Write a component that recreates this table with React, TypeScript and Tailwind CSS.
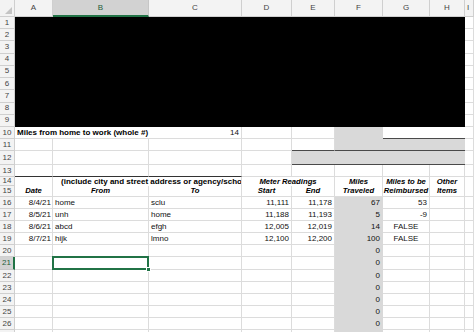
import React from 'react';

// column widths (px) — hdr 15, A 38, B 96, C 93, D 50, E 43, F 48, G 47, H 35, I rest
const GRID = 'border-r border-b border-[#dcdcdc]';
const FILL = 'bg-[#d9d9d9] border-r border-b border-transparent';

interface Trip {
  date: string;
  from: string;
  to: string;
  start: string;
  end: string;
  miles: string;
  reimb: string;
}

const TRIPS: Trip[] = [
  { date: '8/4/21', from: 'home', to: 'sclu', start: '11,111', end: '11,178', miles: '67', reimb: '53' },
  { date: '8/5/21', from: 'unh', to: 'home', start: '11,188', end: '11,193', miles: '5', reimb: '-9' },
  { date: '8/6/21', from: 'abcd', to: 'efgh', start: '12,005', end: '12,019', miles: '14', reimb: 'FALSE' },
  { date: '8/7/21', from: 'hijk', to: 'lmno', start: '12,100', end: '12,200', miles: '100', reimb: 'FALSE' },
];

function Cell({
  w,
  className = '',
  clip = true,
  children,
}: {
  w: string;
  className?: string;
  clip?: boolean;
  children?: React.ReactNode;
}) {
  return (
    <div
      className={`${w} shrink-0 h-full flex items-center whitespace-nowrap ${clip ? 'overflow-hidden' : 'relative'} ${className}`}
    >
      {children}
    </div>
  );
}

function RowHead({ n, active = false }: { n: number | string; active?: boolean }) {
  return (
    <div
      className={`w-[15px] shrink-0 h-full flex items-center justify-center border-b text-[8px] ${
        active
          ? 'bg-[#d2d2d2] border-r-2 border-r-[#217346] border-b-[#c6c6c6] text-[#1e5e3a]'
          : 'bg-[#f3f3f3] border-r border-[#cfcfcf] text-[#444]'
      }`}
    >
      {n}
    </div>
  );
}

function ColHead({ w, label, active = false }: { w: string; label: string; active?: boolean }) {
  return (
    <div
      className={`${w} shrink-0 h-full flex items-center justify-center text-[8px] ${
        active
          ? 'bg-[#d2d2d2] border-r border-r-[#c6c6c6] border-b-2 border-b-[#217346] text-[#1e5e3a]'
          : 'bg-[#f3f3f3] border-r border-b border-[#cfcfcf] text-[#444]'
      }`}
    >
      {label}
    </div>
  );
}

const Hd = ({ children }: { children: React.ReactNode }) => (
  <span className="font-bold italic text-black text-[7.7px]">{children}</span>
);

export default function App() {
  const emptyRows = [20, 21, 22, 23, 24, 25, 26, 27];

  return (
    <div className="w-[474px] h-[332px] overflow-hidden bg-white text-[8px] leading-none text-[#111] font-['Liberation_Sans',Arial,sans-serif]">
      {/* Column headers */}
      <div className="flex h-[17px]">
        <div className="w-[15px] shrink-0 h-full bg-[#f3f3f3] border-r border-b border-[#cfcfcf] flex items-end justify-end p-[2px]">
          <svg width="7" height="7" viewBox="0 0 7 7">
            <polygon points="7,0 7,7 0,7" fill="#c4c4c4" />
          </svg>
        </div>
        <ColHead w="w-[38px]" label="A" />
        <ColHead w="w-[96px]" label="B" active />
        <ColHead w="w-[93px]" label="C" />
        <ColHead w="w-[50px]" label="D" />
        <ColHead w="w-[43px]" label="E" />
        <ColHead w="w-[48px]" label="F" />
        <ColHead w="w-[47px]" label="G" />
        <ColHead w="w-[35px]" label="H" />
        <ColHead w="flex-1 !justify-start pl-[2px]" label="I" />
      </div>

      {/* Rows 1-9: blacked out block */}
      <div className="flex h-[110px]">
        <div className="w-[15px] shrink-0 flex flex-col">
          {[1, 2, 3, 4, 5, 6, 7, 8, 9].map((n) => (
            <div key={n} className="flex-1">
              <RowHead n={n} />
            </div>
          ))}
        </div>
        <div className="w-[450px] shrink-0 bg-black" />
        <div className="flex-1 flex flex-col">
          {[1, 2, 3, 4, 5, 6, 7, 8, 9].map((n) => (
            <div key={n} className={`flex-1 ${GRID}`} />
          ))}
        </div>
      </div>

      {/* Row 10 */}
      <div className="flex h-[12px]">
        <RowHead n={10} />
        <Cell w="w-[227px]" className="border-r border-b border-[#dcdcdc] justify-between px-[2px]">
          <span className="font-bold text-black">Miles from home to work (whole #)</span>
          <span>14</span>
        </Cell>
        <Cell w="w-[50px]" className={GRID} />
        <Cell w="w-[43px]" className={GRID} />
        <Cell w="w-[48px]" className={FILL} />
        <Cell w="w-[82px]" className="border-b border-b-[#4a4a4a]" />
        <Cell w="flex-1" className={GRID} />
      </div>

      {/* Row 11 */}
      <div className="flex h-[12px]">
        <RowHead n={11} />
        <Cell w="w-[38px]" className={GRID} />
        <Cell w="w-[96px]" className={GRID} />
        <Cell w="w-[93px]" className={GRID} />
        <Cell w="w-[50px]" className={GRID} />
        <Cell w="w-[43px]" className="border-r border-[#dcdcdc] border-b border-b-[#4a4a4a]" />
        <Cell w="w-[130px]" className="bg-[#d9d9d9] border-b border-b-[#4a4a4a]" />
        <Cell w="flex-1" className={GRID} />
      </div>

      {/* Row 12 */}
      <div className="flex h-[14px]">
        <RowHead n={12} />
        <Cell w="w-[38px]" className={GRID} />
        <Cell w="w-[96px]" className={GRID} />
        <Cell w="w-[93px]" className={GRID} />
        <Cell w="w-[50px]" className={GRID} />
        <Cell w="w-[173px]" className="bg-[#d9d9d9] border-b border-b-[#4a4a4a]" />
        <Cell w="flex-1" className={GRID} />
      </div>

      {/* Row 13 */}
      <div className="flex h-[12px]">
        <RowHead n={13} />
        <Cell w="w-[38px]" className="border-r border-[#dcdcdc] border-b border-b-[#333]" />
        <Cell w="w-[96px]" className="border-r border-[#dcdcdc] border-b border-b-[#333]" />
        <Cell w="w-[93px]" className="border-r border-[#dcdcdc] border-b border-b-[#333]" />
        <Cell w="w-[50px]" className={GRID} />
        <Cell w="w-[43px]" className={GRID} />
        <Cell w="w-[48px]" className={GRID} />
        <Cell w="w-[47px]" className={GRID} />
        <Cell w="w-[35px]" className={GRID} />
        <Cell w="flex-1" className={GRID} />
      </div>

      {/* Row 14 */}
      <div className="flex h-[9px]">
        <RowHead n={14} />
        <Cell w="w-[38px]" className="border-r border-[#dcdcdc]" />
        <Cell w="w-[189px]" className="border-r border-[#dcdcdc] pl-[8px]">
          <span className="font-bold text-black">(include city and street address or agency/school)</span>
        </Cell>
        <Cell w="w-[93px]" className="border-r border-[#dcdcdc] justify-center">
          <Hd>Meter Readings</Hd>
        </Cell>
        <Cell w="w-[48px]" className="border-r border-[#dcdcdc] justify-center">
          <Hd>Miles</Hd>
        </Cell>
        <Cell w="w-[47px]" className="border-r border-[#dcdcdc] justify-center">
          <Hd>Miles to be</Hd>
        </Cell>
        <Cell w="w-[35px]" className="border-r border-[#dcdcdc] justify-center">
          <Hd>Other</Hd>
        </Cell>
        <Cell w="flex-1" className="border-r border-[#dcdcdc]" />
      </div>

      {/* Row 15 */}
      <div className="flex h-[11px]">
        <RowHead n={15} />
        <Cell w="w-[38px]" className={`${GRID} justify-center`}>
          <Hd>Date</Hd>
        </Cell>
        <Cell w="w-[96px]" className={`${GRID} justify-center`}>
          <Hd>From</Hd>
        </Cell>
        <Cell w="w-[93px]" className={`${GRID} justify-center`}>
          <Hd>To</Hd>
        </Cell>
        <Cell w="w-[50px]" className={`${GRID} justify-center`}>
          <Hd>Start</Hd>
        </Cell>
        <Cell w="w-[43px]" className={`${GRID} justify-center`}>
          <Hd>End</Hd>
        </Cell>
        <Cell w="w-[48px]" className={`${GRID} justify-center`}>
          <Hd>Traveled</Hd>
        </Cell>
        <Cell w="w-[47px]" className={`${GRID} justify-center`}>
          <Hd>Reimbursed</Hd>
        </Cell>
        <Cell w="w-[35px]" className={`${GRID} justify-center`}>
          <Hd>Items</Hd>
        </Cell>
        <Cell w="flex-1" className={GRID} />
      </div>

      {/* Rows 16-19: trips */}
      {TRIPS.map((t, i) => (
        <div key={t.date} className="flex h-[12px]">
          <RowHead n={16 + i} />
          <Cell w="w-[38px]" className={`${GRID} justify-end pr-[1px]`}>
            {t.date}
          </Cell>
          <Cell w="w-[96px]" className={`${GRID} pl-[2px]`}>
            {t.from}
          </Cell>
          <Cell w="w-[93px]" className={`${GRID} pl-[2px]`}>
            {t.to}
          </Cell>
          <Cell w="w-[50px]" className={`${GRID} justify-end pr-[2px]`}>
            {t.start}
          </Cell>
          <Cell w="w-[43px]" className={`${GRID} justify-end pr-[2px]`}>
            {t.end}
          </Cell>
          <Cell w="w-[48px]" className={`${FILL} justify-end pr-[2px]`}>
            {t.miles}
          </Cell>
          <Cell
            w="w-[47px]"
            className={`${GRID} ${t.reimb === 'FALSE' ? 'justify-center' : 'justify-end pr-[2px]'}`}
          >
            {t.reimb}
          </Cell>
          <Cell w="w-[35px]" className={GRID} />
          <Cell w="flex-1" className={GRID} />
        </div>
      ))}

      {/* Rows 20-27: empty, formula zeros in F */}
      {emptyRows.map((n) => {
        const selected = n === 21;
        return (
          <div key={n} className={`flex ${selected ? 'h-[13px]' : 'h-[12px]'}`}>
            <RowHead n={n} active={selected} />
            <Cell w="w-[38px]" className={GRID} />
            <Cell w="w-[96px]" className={GRID} clip={!selected}>
              {selected && (
                <div className="absolute -top-[1px] -left-[1px] -right-[1px] -bottom-[1px] border-2 border-[#217346]">
                  <div className="absolute -right-[4px] -bottom-[4px] w-[5px] h-[5px] bg-[#217346] border border-white" />
                </div>
              )}
            </Cell>
            <Cell w="w-[93px]" className={GRID} />
            <Cell w="w-[50px]" className={GRID} />
            <Cell w="w-[43px]" className={GRID} />
            <Cell w="w-[48px]" className={`${FILL} justify-end pr-[2px]`}>
              {n < 27 ? '0' : ''}
            </Cell>
            <Cell w="w-[47px]" className={GRID} />
            <Cell w="w-[35px]" className={GRID} />
            <Cell w="flex-1" className={GRID} />
          </div>
        );
      })}
    </div>
  );
}
